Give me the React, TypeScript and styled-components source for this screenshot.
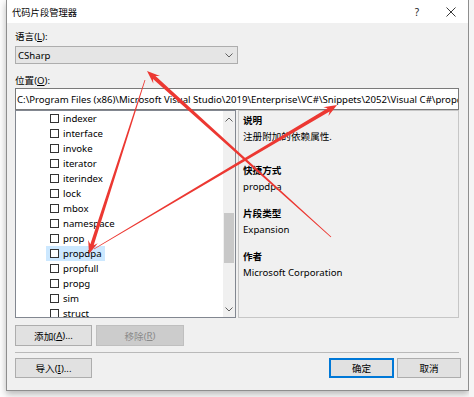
import React from 'react'
import styled, { createGlobalStyle } from 'styled-components'

const GlobalStyle = createGlobalStyle`
  html, body {
    margin: 0;
    padding: 0;
    background: #fbfbfb;
  }
  body {
    font-family: "Noto Sans", "Noto Sans CJK SC", sans-serif;
    font-size: 9.6px;
    color: #000;
  }
`

const Screen = styled.div`
  position: relative;
  width: 474px;
  height: 397px;
  display: flex;
  overflow: hidden;
  background: #fbfbfb;
`

const LeftStrip = styled.div`
  width: 6px;
  flex-shrink: 0;
  background: #fdfdfd;
`

const RightStrip = styled.div`
  flex: 1;
  background: #f5f5f5;
`

const Dialog = styled.div`
  width: 463px;
  height: 391px;
  flex-shrink: 0;
  box-sizing: border-box;
  border: 1px solid #8e8e8e;
  border-top: none;
  background: #f0f0f0;
  display: flex;
  flex-direction: column;
  box-shadow: 0 3px 7px rgba(0, 0, 0, 0.28);
`

const TitleBar = styled.div`
  height: 23px;
  flex-shrink: 0;
  background: #fff;
  display: flex;
  align-items: center;
  padding-left: 5px;
`

const Title = styled.span`
  flex: 1;
  font-size: 9.3px;
`

const TitleButton = styled.div`
  width: 34px;
  height: 23px;
  display: flex;
  align-items: center;
  justify-content: center;
  font-size: 10px;
  color: #222;
`

const Body = styled.div`
  flex: 1;
  display: flex;
  flex-direction: column;
  padding: 0 9px 0 8px;
`

const FieldLabel = styled.div<{ $top: number }>`
  height: 14px;
  line-height: 14px;
  margin-top: ${p => p.$top}px;
`

const Accel = styled.span`
  text-decoration: underline;
`

const Combo = styled.div`
  margin-top: 2px;
  width: 223px;
  height: 18px;
  box-sizing: border-box;
  border: 1px solid #adadad;
  background: #e5e5e5;
  display: flex;
  align-items: center;
  padding: 0 4px 0 2px;
`

const ComboText = styled.span`
  flex: 1;
`

const PathBox = styled.div`
  height: 22px;
  box-sizing: border-box;
  border: 1px solid #7a7a7a;
  background: #fff;
  display: flex;
  align-items: center;
  padding-left: 1px;
  white-space: nowrap;
  overflow: hidden;
`

const MainArea = styled.div`
  height: 208px;
  display: flex;
  gap: 2px;
`

const ListBox = styled.div`
  width: 221px;
  box-sizing: border-box;
  border: 1px solid #828790;
  background: #fff;
  display: flex;
  overflow: hidden;
`

const ItemList = styled.div`
  flex: 1;
  padding-left: 30px;
  overflow: hidden;
`

const Item = styled.div<{ $selected?: boolean }>`
  height: 15px;
  width: fit-content;
  display: flex;
  align-items: center;
  gap: 4px;
  padding: 0 3px 0 4px;
  background: ${p => (p.$selected ? '#cce8ff' : 'transparent')};
`

const CheckBox = styled.span`
  width: 9px;
  height: 9px;
  box-sizing: border-box;
  border: 1px solid #333;
  background: #fff;
`

const ScrollBar = styled.div`
  width: 12px;
  background: #f0f0f0;
  display: flex;
  flex-direction: column;
`

const ScrollArrow = styled.div`
  height: 16px;
  display: flex;
  align-items: center;
  justify-content: center;
`

const Track = styled.div`
  flex: 1;
`

const Thumb = styled.div`
  margin: 86px 0 0 1px;
  width: 10px;
  height: 50px;
  background: #c8c8c8;
`

const Details = styled.div`
  flex: 1;
  box-sizing: border-box;
  border: 1px solid #c6c6c6;
  padding: 2px 4px;
`

const Section = styled.div<{ $gap: number }>`
  margin-bottom: ${p => p.$gap}px;
`

const DetailHeader = styled.div`
  line-height: 16px;
  font-weight: bold;
`

const DetailValue = styled.div`
  line-height: 16px;
`

const ButtonRow = styled.div`
  margin-top: 7px;
  display: flex;
  gap: 4px;
`

const Separator = styled.div`
  margin-top: 6px;
  height: 1px;
  background: #b9b9b9;
`

const Footer = styled.div`
  margin-top: 5px;
  margin-right: -2px;
  display: flex;
  gap: 3px;
`

const Spacer = styled.div`
  flex: 1;
`

const Button = styled.div<{ $w: number; $h: number; $disabled?: boolean; $primary?: boolean }>`
  width: ${p => p.$w}px;
  height: ${p => p.$h}px;
  box-sizing: border-box;
  display: flex;
  align-items: center;
  justify-content: center;
  border: 1px solid ${p => (p.$primary ? '#0078d7' : p.$disabled ? '#bfbfbf' : '#adadad')};
  box-shadow: ${p => (p.$primary ? 'inset 0 0 0 1px #0078d7' : 'none')};
  background: ${p => (p.$disabled ? '#cccccc' : '#e1e1e1')};
  color: ${p => (p.$disabled ? '#8a8a8a' : '#000')};
`

const Overlay = styled.svg`
  position: absolute;
  left: 0;
  top: 0;
  pointer-events: none;
`

const items = [
  'indexer', 'interface', 'invoke', 'iterator', 'iterindex', 'lock', 'mbox',
  'namespace', 'prop', 'propdpa', 'propfull', 'propg', 'sim', 'struct',
]

type Arrow = { x1: number; y1: number; x2: number; y2: number; w1: number; w2: number }

const arrows: Arrow[] = [
  { x1: 331, y1: 237, x2: 147, y2: 71, w1: 0.8, w2: 3.8 },
  { x1: 145, y1: 80, x2: 89, y2: 254, w1: 0.8, w2: 3.6 },
  { x1: 94, y1: 249, x2: 337, y2: 105, w1: 0.8, w2: 3.8 },
]

// tapered shaft, thin at the tail, with a filled head at (x2, y2)
function arrowPoints(a: Arrow, headLen = 13, headW = 10) {
  const dx = a.x2 - a.x1
  const dy = a.y2 - a.y1
  const len = Math.hypot(dx, dy)
  const ux = dx / len
  const uy = dy / len
  const nx = -uy
  const ny = ux
  const bx = a.x2 - ux * headLen
  const by = a.y2 - uy * headLen
  const sx = a.x2 - ux * headLen * 0.75
  const sy = a.y2 - uy * headLen * 0.75
  const pts = [
    [a.x1 + (nx * a.w1) / 2, a.y1 + (ny * a.w1) / 2],
    [sx + (nx * a.w2) / 2, sy + (ny * a.w2) / 2],
    [bx + (nx * headW) / 2, by + (ny * headW) / 2],
    [a.x2, a.y2],
    [bx - (nx * headW) / 2, by - (ny * headW) / 2],
    [sx - (nx * a.w2) / 2, sy - (ny * a.w2) / 2],
    [a.x1 - (nx * a.w1) / 2, a.y1 - (ny * a.w1) / 2],
  ]
  return pts.map(p => p.map(v => v.toFixed(1)).join(',')).join(' ')
}

const Chevron = ({ up }: { up?: boolean }) => (
  <svg width="8" height="5" viewBox="0 0 8 5">
    <polyline
      points={up ? '0.5,4.5 4,1 7.5,4.5' : '0.5,0.5 4,4 7.5,0.5'}
      fill="none"
      stroke="#606060"
      strokeWidth="1"
    />
  </svg>
)

export default function App() {
  return (
    <Screen>
      <GlobalStyle />
      <LeftStrip />
      <Dialog>
        <TitleBar>
          <Title>代码片段管理器</Title>
          <TitleButton>?</TitleButton>
          <TitleButton>
            <svg width="10" height="10" viewBox="0 0 10 10">
              <path d="M0.5 0.5 L9.5 9.5 M9.5 0.5 L0.5 9.5" stroke="#222" strokeWidth="0.9" />
            </svg>
          </TitleButton>
        </TitleBar>
        <Body>
          <FieldLabel $top={7}>语言(<Accel>L</Accel>):</FieldLabel>
          <Combo>
            <ComboText>CSharp</ComboText>
            <Chevron />
          </Combo>
          <FieldLabel $top={10}>位置(<Accel>O</Accel>):</FieldLabel>
          <PathBox>C:\Program Files (x86)\Microsoft Visual Studio\2019\Enterprise\VC#\Snippets\2052\Visual C#\propdpa.snippet</PathBox>
          <MainArea>
            <ListBox>
              <ItemList>
                {items.map(name => (
                  <Item key={name} $selected={name === 'propdpa'}>
                    <CheckBox />
                    {name}
                  </Item>
                ))}
              </ItemList>
              <ScrollBar>
                <ScrollArrow><Chevron up /></ScrollArrow>
                <Track><Thumb /></Track>
                <ScrollArrow><Chevron /></ScrollArrow>
              </ScrollBar>
            </ListBox>
            <Details>
              <Section $gap={18}>
                <DetailHeader>说明</DetailHeader>
                <DetailValue>注册附加的依赖属性.</DetailValue>
              </Section>
              <Section $gap={11}>
                <DetailHeader>快捷方式</DetailHeader>
                <DetailValue>propdpa</DetailValue>
              </Section>
              <Section $gap={11}>
                <DetailHeader>片段类型</DetailHeader>
                <DetailValue>Expansion</DetailValue>
              </Section>
              <Section $gap={11}>
                <DetailHeader>作者</DetailHeader>
                <DetailValue>Microsoft Corporation</DetailValue>
              </Section>
            </Details>
          </MainArea>
          <ButtonRow>
            <Button $w={77} $h={21}>添加(<Accel>A</Accel>)...</Button>
            <Button $w={88} $h={21} $disabled>移除(<Accel>R</Accel>)</Button>
          </ButtonRow>
          <Separator />
          <Footer>
            <Button $w={77} $h={20}>导入(<Accel>I</Accel>)...</Button>
            <Spacer />
            <Button $w={65} $h={20} $primary>确定</Button>
            <Button $w={64} $h={20}>取消</Button>
          </Footer>
        </Body>
      </Dialog>
      <RightStrip />
      <Overlay width="474" height="397" viewBox="0 0 474 397">
        {arrows.map((a, i) => (
          <polygon key={i} points={arrowPoints(a)} fill="#ec3832" />
        ))}
      </Overlay>
    </Screen>
  )
}
